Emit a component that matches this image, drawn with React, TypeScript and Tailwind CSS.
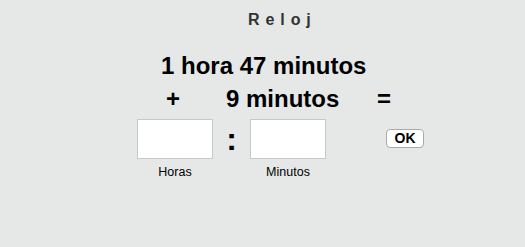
import React from "react";

export default function App() {
  const font = { fontFamily: '"Liberation Sans", Arial, sans-serif' };
  return (
    <div className="w-[525px] h-[247px] bg-[#e5e8e7] text-black overflow-hidden" style={font}>
      <div className="pt-[10px] pl-[248px] text-[16px] leading-[20px] font-bold tracking-[0.37em] text-[#333]">
        Reloj
      </div>
      <div className="mt-[22px] pl-[161px] text-[24px] leading-[28px] font-bold whitespace-nowrap">
        1 hora 47 minutos
      </div>
      <div className="mt-[5px] flex pl-[166px] text-[24px] leading-[28px] font-bold whitespace-nowrap">
        <span className="w-[60px]">+</span>
        <span className="w-[151px]">9 minutos</span>
        <span>=</span>
      </div>
      <div className="mt-[6px] flex items-start pl-[137px]">
        <div className="flex flex-col items-center w-[76px]">
          <input className="w-[76px] h-[40px] bg-white border border-[#c8c8c8] outline-none" />
          <span className="mt-[6px] text-[12.5px] leading-[14px]">Horas</span>
        </div>
        <div className="w-[37px] flex justify-center">
          <span className="text-[32px] leading-[40px] font-bold">:</span>
        </div>
        <div className="flex flex-col items-center w-[76px]">
          <input className="w-[76px] h-[40px] bg-white border border-[#c8c8c8] outline-none" />
          <span className="mt-[6px] text-[12.5px] leading-[14px]">Minutos</span>
        </div>
        <button className="ml-[60px] mt-[10px] w-[38px] h-[19px] bg-white border border-[#a9a9a9] rounded-[4px] text-[14px] leading-[17px] font-bold flex items-center justify-center">
          OK
        </button>
      </div>
    </div>
  );
}
